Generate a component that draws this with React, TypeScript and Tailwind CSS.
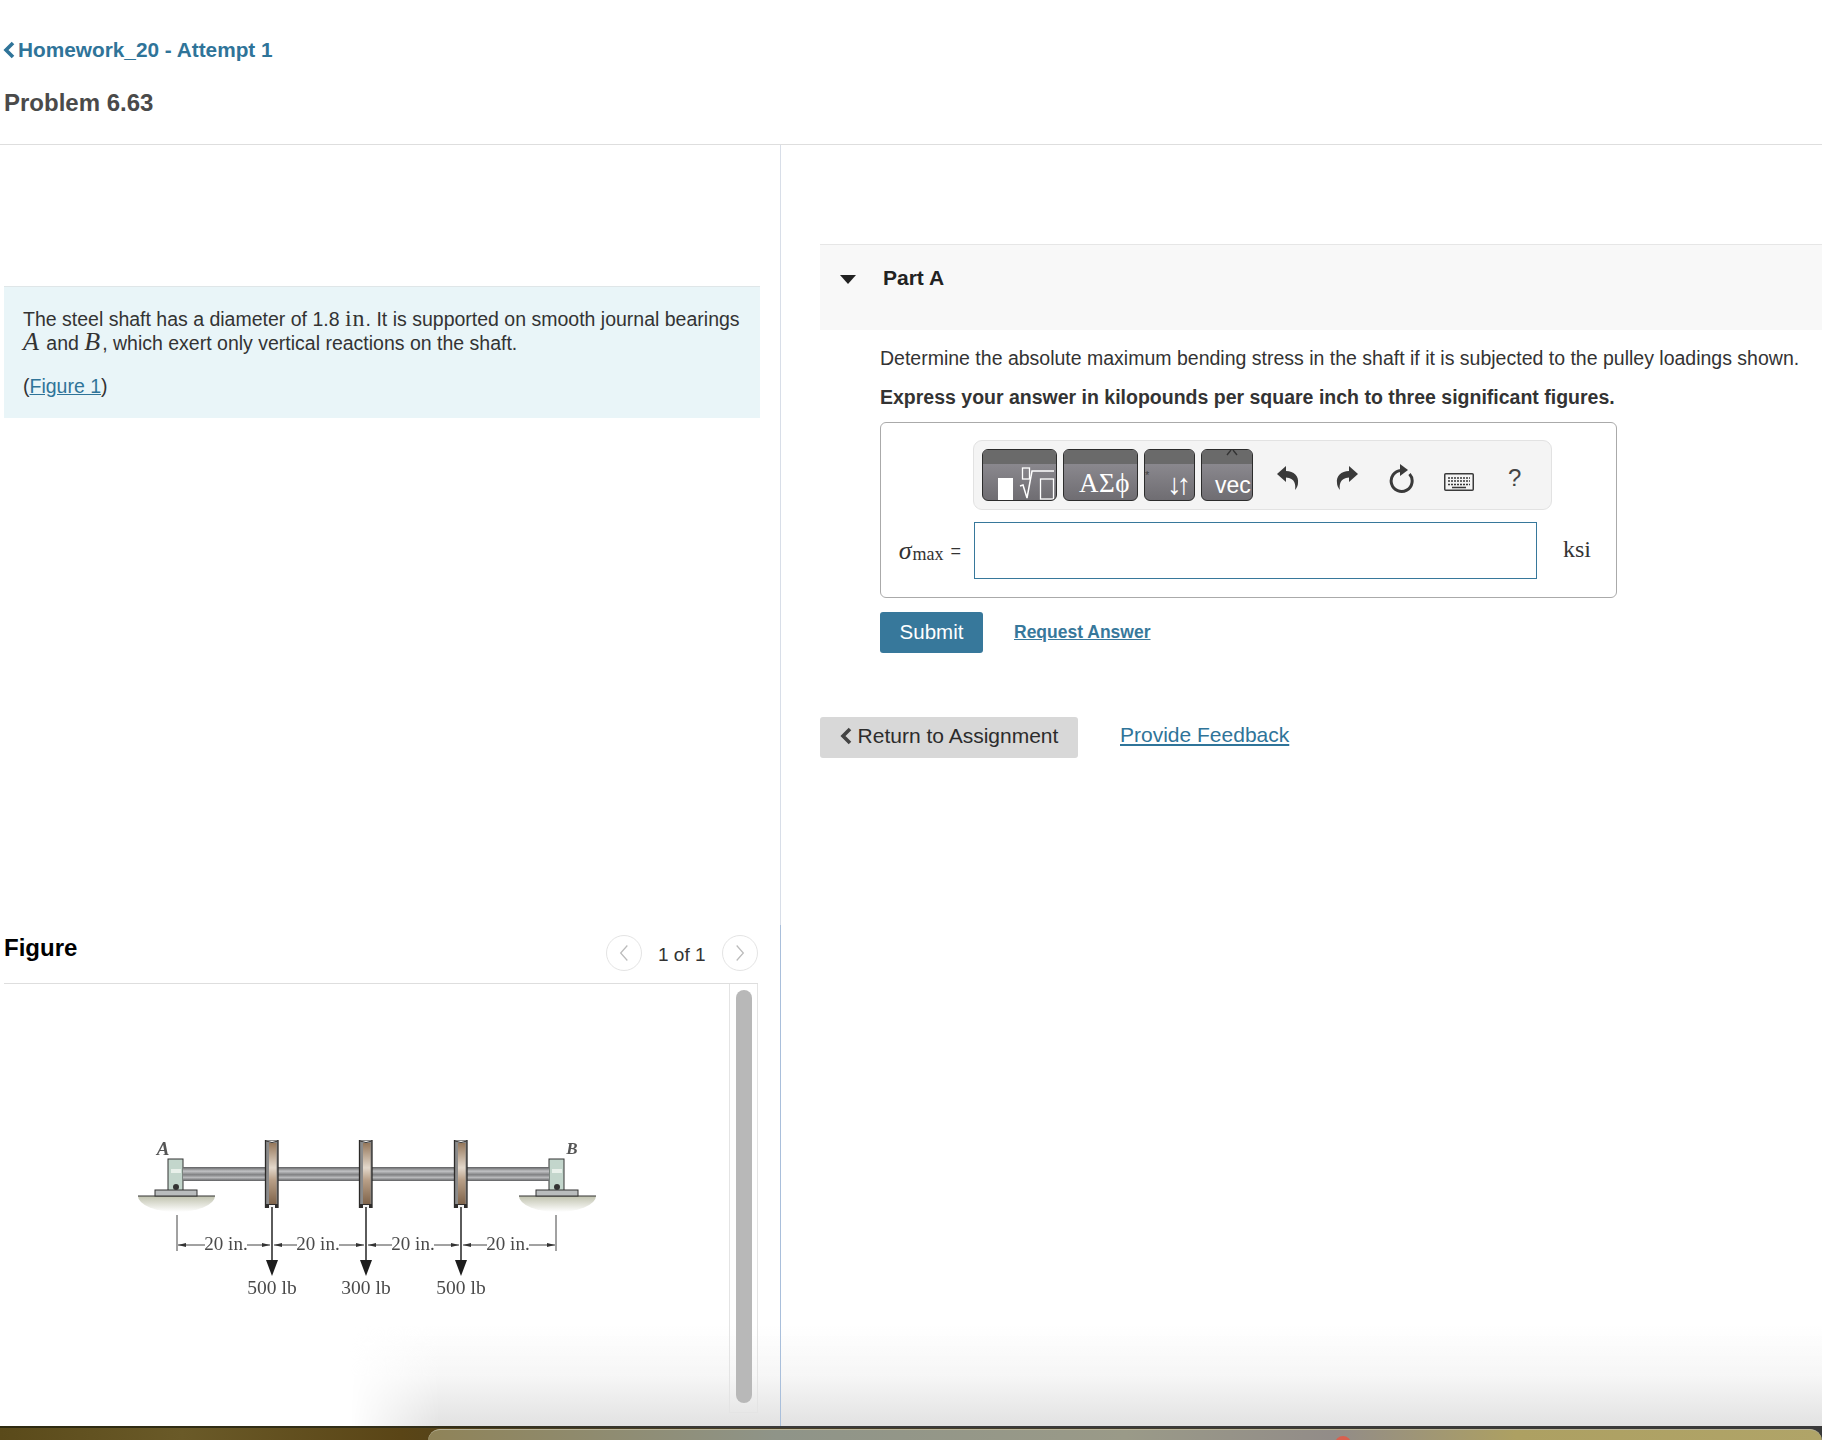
const ToolButton = ({ width, children }: { width: string; children: React.ReactNode }) => (
  <div className={`${width} relative h-[52px] overflow-hidden rounded-[6px] border border-[#2c2c2c] bg-gradient-to-b from-[#959399] to-[#6f6d72]`}>
    <div className="h-[14px] bg-[#6a6a6a]" />
    {children}
  </div>
);

const Chevron = ({ className }: { className: string }) => (
  <svg viewBox="0 0 12 18" className={className} fill="none" stroke="currentColor" strokeWidth={3.6}>
    <path d="M10 2 L3 9 L10 16" />
  </svg>
);

const Pulley = ({ x }: { x: number }) => (
  <g>
    <rect x={x - 6} y={1141} width={12} height={68} fill="#8b8b8b" />
    <rect x={x - 3} y={1144} width={7.5} height={62} fill="url(#pulley)" />
    <path d={`M${x - 6.5} 1141 V1209 M${x + 6} 1141 V1209`} stroke="#2c2a28" strokeWidth={1.3} />
    <path d={`M${x - 6} 1142 q6 3 12 0`} fill="#fff" stroke="#33302e" strokeWidth={1} />
    <rect x={x - 6} y={1205} width={12} height={4} fill="#2f2d2c" />
    <rect x={x - 3} y={1206} width={6} height={3} fill="#f5f5f5" />
  </g>
);

const Arrow = ({ x, label }: { x: number; label: string }) => (
  <g>
    <line x1={x} y1={1208} x2={x} y2={1264} stroke="#333" strokeWidth={1.6} />
    <polygon points={`${x - 6},1261 ${x + 6},1261 ${x},1277`} fill="#1d1d1d" />
    <text x={x} y={1295} textAnchor="middle" fontSize={19.5} fontFamily="'Liberation Serif', serif" fill="#4a4a4a">
      {label}
    </text>
  </g>
);

const Dim = ({ x1, x2, cx }: { x1: number; x2: number; cx: number }) => (
  <g>
    <line x1={x1} y1={1246} x2={cx - 21} y2={1246} stroke="#444" strokeWidth={1} />
    <line x1={cx + 21} y1={1246} x2={x2} y2={1246} stroke="#444" strokeWidth={1} />
    <polygon points={`${x1},1246 ${x1 + 8},1244 ${x1 + 8},1248`} fill="#333" />
    <polygon points={`${x2},1246 ${x2 - 8},1244 ${x2 - 8},1248`} fill="#333" />
    <text x={cx} y={1251} textAnchor="middle" fontSize={19} fontFamily="'Liberation Serif', serif" fill="#4a4a4a">
      20 in.
    </text>
  </g>
);

const Bearing = ({ x, ground }: { x: number; ground: number }) => (
  <g>
    <path d={`M${ground} 1197 h77 a38.5 16 0 0 1 -77 0`} fill="url(#ground)" />
    <line x1={ground} y1={1197} x2={ground + 77} y2={1197} stroke="#333" strokeWidth={1} />
    <rect x={x} y={1160} width={15} height={32} fill="#c3d6cc" stroke="#333" strokeWidth={1} />
    <rect x={x + 3} y={1170} width={10} height={4} fill="#e8f0ea" />
    <circle cx={x + 8} cy={1188} r={3} fill="#333" />
    <rect x={x - 13} y={1191} width={42} height={6} fill="#b9bcbd" stroke="#333" strokeWidth={1} />
  </g>
);

const ShaftDiagram = () => (
  <svg viewBox="120 1120 500 200" width={500} height={200} className="blur-[0.5px]">
    <defs>
      <linearGradient id="shaft" x1="0" y1="0" x2="0" y2="1">
        <stop offset="0" stopColor="#5f6062" />
        <stop offset="0.3" stopColor="#c2c3c5" />
        <stop offset="0.55" stopColor="#808183" />
        <stop offset="0.75" stopColor="#b8b9bb" />
        <stop offset="1" stopColor="#5f6062" />
      </linearGradient>
      <linearGradient id="pulley" x1="0" y1="0" x2="0" y2="1">
        <stop offset="0" stopColor="#95775b" />
        <stop offset="0.4" stopColor="#e3d8cb" />
        <stop offset="0.6" stopColor="#b89f87" />
        <stop offset="1" stopColor="#7d6148" />
      </linearGradient>
      <linearGradient id="ground" x1="0" y1="0" x2="0" y2="1">
        <stop offset="0" stopColor="#c0c2ae" />
        <stop offset="1" stopColor="#ffffff" />
      </linearGradient>
    </defs>
    <Bearing x={168} ground={138} />
    <Bearing x={549} ground={519} />
    <rect x={183} y={1168} width={366} height={14} fill="url(#shaft)" />
    <Pulley x={272} />
    <Pulley x={366} />
    <Pulley x={461} />
    <Arrow x={272} label="500 lb" />
    <Arrow x={366} label="300 lb" />
    <Arrow x={461} label="500 lb" />
    <line x1={177} y1={1216} x2={177} y2={1252} stroke="#444" strokeWidth={1} />
    <line x1={556} y1={1216} x2={556} y2={1252} stroke="#444" strokeWidth={1} />
    <Dim x1={178} x2={270} cx={226} />
    <Dim x1={274} x2={364} cx={318} />
    <Dim x1={368} x2={459} cx={413} />
    <Dim x1={463} x2={555} cx={508} />
    <text x={163} y={1156} textAnchor="middle" fontSize={19} fontStyle="italic" fontWeight="bold" fontFamily="'Liberation Serif', serif" fill="#555">
      A
    </text>
    <text x={572} y={1155} textAnchor="middle" fontSize={17} fontStyle="italic" fontWeight="bold" fontFamily="'Liberation Serif', serif" fill="#555">
      B
    </text>
  </svg>
);

const undoPath = 'M0 9 L9 1 V6 C17 6 22 11 21 18 C21 20 20 23 18 25 C19 20 18 13 9 12.5 V17 Z';

const Toolbar = () => (
  <div className="flex h-[70px] w-[579px] items-center gap-[6px] rounded-[9px] border border-[#e2e2e2] bg-[#f4f4f4] pl-[8px]">
    <ToolButton width="w-[75px]">
      <svg width={73} height={37} viewBox="0 0 73 37" className="text-white">
        <rect x={15} y={14} width={15} height={23} fill="#fff" />
        <rect x={39.5} y={4} width={7} height={11} fill="none" stroke="currentColor" strokeWidth={1.3} />
        <path d="M37 22 l3 -1 l4 13 l5 -27 h22" fill="none" stroke="currentColor" strokeWidth={1.5} />
        <rect x={57.5} y={15} width={13} height={20} fill="none" stroke="currentColor" strokeWidth={1.3} />
      </svg>
    </ToolButton>
    <ToolButton width="w-[75px]">
      <div className="pl-[15px] pt-[2px] font-['Liberation_Serif',serif] text-[27px] leading-[34px] tracking-[0.5px] text-white">ΑΣϕ</div>
    </ToolButton>
    <ToolButton width="w-[51px]">
      <span className="absolute left-0 top-[20px] text-[11px] leading-none text-[#444]">*</span>
      <div className="pl-[22px] pt-[5px] text-[29px] leading-[30px] tracking-[-5px] text-white">↓↑</div>
    </ToolButton>
    <ToolButton width="w-[52px]">
      <svg width={16} height={8} viewBox="0 0 16 8" className="absolute left-[22px] top-0 text-[#333]">
        <path d="M3 5 L7 0 M9 0 L13 5" stroke="currentColor" strokeWidth={1.4} fill="none" />
      </svg>
      <div className="pl-[13px] pt-[7px] text-[23px] leading-[28px] text-white">vec</div>
    </ToolButton>
    <div className="relative h-full flex-1 text-[#3a3a3a]">
      <svg viewBox="0 0 22 26" width={22} height={26} className="absolute left-[18px] top-[24px]" fill="currentColor">
        <path d={undoPath} />
      </svg>
      <svg viewBox="0 0 22 26" width={22} height={26} className="absolute left-[77px] top-[24px] -scale-x-100" fill="currentColor">
        <path d={undoPath} />
      </svg>
      <svg viewBox="0 0 28 30" width={28} height={30} className="absolute left-[129px] top-[23px]">
        <path d="M13 6.5 A10.5 10.5 0 1 0 21.5 10" fill="none" stroke="currentColor" strokeWidth={3} />
        <polygon points="12,0 20,6 12,12" fill="currentColor" />
      </svg>
      <svg viewBox="0 0 30 18" width={30} height={18} className="absolute left-[185px] top-[32px]">
        <rect x={0.75} y={0.75} width={28.5} height={16.5} rx={1} fill="#f4f4f4" stroke="currentColor" strokeWidth={1.5} />
        <path d="M4 5h22M4 8h22" stroke="currentColor" strokeWidth={1.6} strokeDasharray="2 1" />
        <path d="M4 11.5h22" stroke="currentColor" strokeWidth={1.6} strokeDasharray="2 1" />
        <path d="M8 14.5h14" stroke="currentColor" strokeWidth={1.5} />
      </svg>
      <span className="absolute left-[249px] top-[23px] text-[24px] leading-[28px] text-[#444]">?</span>
    </div>
  </div>
);

const mathLetter = "mr-[2px] font-['Liberation_Serif',serif] text-[26px] leading-[0]";

export default function App() {
  return (
    <div className="relative flex h-[1440px] flex-col overflow-hidden bg-white font-['Liberation_Sans',sans-serif] text-[#333]">
      {/* Header */}
      <header className="h-[145px] border-b border-[#dedede] pl-[3px] pt-[37px]">
        <a className="flex items-center text-[20.8px] font-bold leading-[26px] text-[#2f7499]">
          <Chevron className="mr-[3px] h-[18px] w-[12px]" />
          Homework_20 - Attempt 1
        </a>
        <h1 className="ml-[1px] mt-[26px] text-[24px] font-bold leading-[28px] text-[#4a4a4a]">Problem 6.63</h1>
      </header>

      <main className="grid flex-1 grid-cols-[781px_1fr]">
        {/* Left pane */}
        <section className="relative z-10 flex flex-col border-r pl-[4px] pr-[20px] pt-[141px] [border-image:linear-gradient(to_bottom,#d8dee8_780px,#a9bfdb_780px)_1]">
          <div className="h-[132px] border-t border-[#dfe6e8] bg-[#e9f5f8] pl-[19px] pt-[20px] text-[19.5px] leading-[24px]">
            <p>
              The steel shaft has a diameter of 1.8 <span className="font-['Liberation_Serif',serif] text-[24px] leading-[0] tracking-[1px]">in</span>. It is supported on smooth journal bearings
              <br />
              <i className={mathLetter}>A</i> and <i className={mathLetter}>B</i>, which exert only vertical reactions on the shaft.
            </p>
            <p className="mt-[19px]">
              (<a className="text-[#2f7499] underline">Figure 1</a>)
            </p>
          </div>

          <div className="mr-[2px] mt-[517px] flex h-[49px] items-start justify-between border-b border-[#dedede]">
            <h2 className="mt-[-5px] text-[24px] font-bold leading-[36px] text-black">Figure</h2>
            <div className="flex items-center text-[19px]">
              <div className="flex size-[36px] items-center justify-center rounded-full border border-[#e4e4e4] text-[#bbb]">
                <svg viewBox="0 0 12 20" width={10} height={18} fill="none" stroke="currentColor" strokeWidth={1.5}>
                  <path d="M10 1 L2 10 L10 19" />
                </svg>
              </div>
              <span className="mx-[16px] w-[48px] whitespace-nowrap pt-[4px] text-[#333]">1 of 1</span>
              <div className="flex size-[36px] items-center justify-center rounded-full border border-[#e4e4e4] text-[#bbb]">
                <svg viewBox="0 0 12 20" width={10} height={18} fill="none" stroke="currentColor" strokeWidth={1.5}>
                  <path d="M2 1 L10 10 L2 19" />
                </svg>
              </div>
            </div>
          </div>

          <div className="mr-[2px] flex h-[429px]">
            <div className="flex-1 pl-[116px] pt-[135px]">
              <ShaftDiagram />
            </div>
            <div className="w-[29px] border-x border-b border-[#e4e4e4] px-[6px] pb-[9px] pt-[6px]">
              <div className="h-full w-[16px] rounded-full bg-[#b8b8b8]" />
            </div>
          </div>
        </section>

        {/* Right pane */}
        <section className="pl-[39px] pt-[99px]">
          <div className="flex h-[86px] items-start border-t border-[#e6e6e6] bg-[#f8f8f8] pl-[20px] pt-[20px]">
            <svg width={16} height={9} viewBox="0 0 16 9" className="mt-[10px]">
              <polygon points="0,0 16,0 8,9" fill="#222" />
            </svg>
            <h3 className="ml-[27px] text-[21px] font-bold leading-[26px] text-[#222]">Part A</h3>
          </div>

          <div className="pl-[60px]">
            <p className="mt-[16px] whitespace-nowrap text-[19.5px] leading-[24px]">
              Determine the absolute maximum bending stress in the shaft if it is subjected to the pulley loadings shown.
            </p>
            <p className="mt-[15px] whitespace-nowrap text-[19.5px] font-bold leading-[24px]">
              Express your answer in kilopounds per square inch to three significant figures.
            </p>

            <div className="mt-[13px] h-[176px] w-[737px] rounded-[6px] border border-[#aaa] pl-[92px] pt-[17px]">
              <Toolbar />
              <div className="mt-[12px] flex items-center">
                <div className="ml-[-78px] flex w-[79px] items-center justify-end pr-[13px] font-['Liberation_Serif',serif] text-[#333]">
                  <i className="text-[26px] leading-[28px]">σ</i>
                  <span className="ml-[1px] mt-[7px] text-[18px] leading-[20px]">max</span>
                  <span className="ml-[7px] mt-[1px] font-['Liberation_Sans',sans-serif] text-[18px] leading-[20px]">=</span>
                </div>
                <div className="h-[57px] w-[563px] border border-[#37789b]" />
                <span className="ml-[26px] pb-[4px] font-['Liberation_Serif',serif] text-[24px] text-[#333]">ksi</span>
              </div>
            </div>

            <div className="mt-[14px] flex items-center">
              <button className="h-[41px] w-[103px] rounded-[3px] bg-[#37789b] text-[20.5px] text-white">Submit</button>
              <a className="ml-[31px] text-[17.5px] font-bold text-[#37789b] underline">Request Answer</a>
            </div>
          </div>

          <div className="mt-[64px] flex items-center">
            <button className="flex h-[41px] w-[258px] items-center justify-center rounded-[3px] bg-[#d8d8d8] pb-[3px] text-[21px] text-[#2c2c2c]">
              <Chevron className="mr-[6px] h-[18px] w-[12px] text-[#444]" />
              Return to Assignment
            </button>
            <a className="ml-[42px] pb-[6px] text-[21px] text-[#2f7499] underline">Provide Feedback</a>
          </div>
        </section>
      </main>

      {/* Window shadow and desktop peeking in at the bottom edge */}
      <div className="pointer-events-none absolute bottom-[14px] left-[350px] right-0 h-[100px] bg-gradient-to-b from-transparent via-[#f6f6f6] to-[#e2e2e2] [mask-image:linear-gradient(to_right,transparent,black_90px)]" />
      <div className="relative h-[14px] bg-[linear-gradient(to_right,#5a4a1a,#6a5a28_10%,#5a4516_22%,#4a3f20_30%,#3a3a3a_100%)]">
        <div className="h-[2px] bg-[linear-gradient(to_right,#2e2a10,#332f1a_25%,#3a3a3a_40%)]" />
        <div className="absolute left-[428px] right-0 top-[3px] h-[20px] rounded-t-[12px] border-t border-[#b9b49a] bg-[linear-gradient(to_right,#8f8358,#8f9488_25%,#9a9a88_50%,#928c88_65%,#ada062_78%,#b0a468)]" />
        <div className="absolute left-[1335px] top-[10px] size-[16px] rounded-full bg-[#d9604f]" />
      </div>
    </div>
  );
}
